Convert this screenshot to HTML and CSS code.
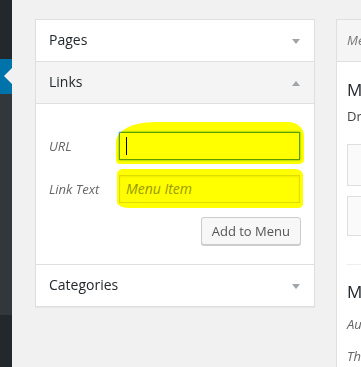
FILE: index.html
```html
<!DOCTYPE html>
<html lang="en">

<head>
    <meta charset="UTF-8">
    <meta name="viewport" content="width=device-width, initial-scale=1.0">
    <title>Menus</title>
    <link rel="stylesheet" href="styles.css">
</head>

<body>
    <div id="adminmenu">
        <div class="menu-top"></div>
        <div class="menu-current"><span class="notch"></span></div>
        <div class="menu-rest"></div>
        <div class="menu-bottom"></div>
    </div>

    <div id="content">
        <div class="accordion">
            <div class="section">
                <h3 class="section-title">Pages <span class="arrow down"></span></h3>
            </div>
            <div class="section open">
                <h3 class="section-title">Links <span class="arrow up"></span></h3>
                <div class="section-body">
                    <div class="field-row">
                        <label>URL</label>
                        <div class="input-wrap">
                            <div class="text-input focused"><span class="caret"></span></div>
                            <span class="highlight hl-one"></span>
                        </div>
                    </div>
                    <div class="field-row">
                        <label>Link Text</label>
                        <div class="input-wrap">
                            <div class="text-input"><span class="placeholder">Menu Item</span></div>
                            <span class="highlight hl-two"></span>
                        </div>
                    </div>
                    <div class="button-row">
                        <button class="button">Add to Menu</button>
                    </div>
                </div>
            </div>
            <div class="section">
                <h3 class="section-title">Categories <span class="arrow down"></span></h3>
            </div>
        </div>

        <div class="menu-edit">
            <div class="menu-header">Menu Name</div>
            <div class="menu-body">
                <h3>Menu Structure</h3>
                <p class="drag-note">Drag each item into the order you prefer.</p>
                <div class="menu-item"></div>
                <div class="menu-item short"></div>
                <hr>
                <h3>Menu Settings</h3>
                <p class="setting">Auto add pages</p>
                <p class="setting">Theme locations</p>
            </div>
        </div>
    </div>
</body>

</html>
```

FILE: styles.css
```css
body {
    margin: 0;
    height: 367px;
    overflow: hidden;
    display: flex;
    background-color: #f1f1f1;
    font-family: "Open Sans", "DejaVu Sans", sans-serif;
    color: #23282d;
}

#adminmenu {
    width: 12px;
    flex: none;
    display: flex;
    flex-direction: column;
}

.menu-top {
    height: 59px;
    background-color: #23282d;
}

.menu-current {
    position: relative;
    height: 35px;
    background-color: #0073aa;
}

.notch {
    position: absolute;
    right: 0;
    top: 9px;
    width: 0;
    height: 0;
    border-top: 8px solid transparent;
    border-bottom: 8px solid transparent;
    border-right: 8px solid #f1f1f1;
}

.menu-rest {
    height: 221px;
    background-color: #32373c;
}

.menu-bottom {
    flex: 1;
    background-color: #23282d;
}

#content {
    display: flex;
    align-items: flex-start;
    gap: 21px;
    padding: 19px 0 0 23px;
}

.accordion {
    width: 278px;
    flex: none;
    background-color: #fff;
    border: 1px solid #dfdfdf;
    box-shadow: 0 1px 1px rgba(0, 0, 0, 0.04);
}

.section {
    border-bottom: 1px solid #dfdfdf;
}

.section:last-child {
    border-bottom: none;
}

.section-title {
    position: relative;
    margin: 0;
    padding: 9px 13px 11px;
    height: 21px;
    line-height: 21px;
    font-size: 14px;
    font-weight: normal;
}

.open .section-title {
    background-color: #f4f4f4;
    border-bottom: 1px solid #dfdfdf;
}

.arrow {
    position: absolute;
    right: 14px;
    top: 19px;
    width: 0;
    height: 0;
    border-left: 4px solid transparent;
    border-right: 4px solid transparent;
}

.arrow.down {
    border-top: 5px solid #a0a5aa;
}

.arrow.up {
    border-bottom: 5px solid #a0a5aa;
}

.section-body {
    padding: 28px 13px 19px 13px;
}

.field-row {
    display: flex;
    align-items: center;
    margin-bottom: 15px;
}

.field-row label {
    width: 70px;
    flex: none;
    font-size: 13px;
    font-style: italic;
    color: #666;
}

.input-wrap {
    position: relative;
    flex: 1;
    margin-right: 1px;
}

.text-input {
    position: relative;
    height: 26px;
    border: 1px solid #ddd;
    background-color: #fff;
    box-shadow: inset 0 1px 2px rgba(0, 0, 0, 0.07);
    font-size: 14px;
    line-height: 26px;
    padding: 0 6px;
}

.text-input.focused {
    border-color: #5b9dd9;
    box-shadow: 0 0 2px rgba(30, 140, 190, 0.8);
}

.caret {
    position: absolute;
    left: 6px;
    top: 4px;
    height: 18px;
    border-left: 1px solid #000;
}

.placeholder {
    font-style: italic;
    color: #999;
}

.highlight {
    position: absolute;
    background-color: #ffff00;
    mix-blend-mode: multiply;
    pointer-events: none;
}

.hl-one {
    left: -3px;
    right: -4px;
    top: -10px;
    bottom: -4px;
    border-radius: 38px 16px 5px 4px / 20px 14px 4px 4px;
}

.hl-two {
    left: -2px;
    right: -3px;
    top: -6px;
    bottom: -5px;
    border-radius: 6px 8px 5px 12px / 5px 6px 4px 6px;
}

.button-row {
    display: flex;
    justify-content: flex-end;
    margin-top: -1px;
}

.button {
    height: 28px;
    padding: 0 10px;
    border: 1px solid #ccc;
    border-radius: 3px;
    background-color: #f7f7f7;
    box-shadow: 0 1px 0 #ccc;
    font-family: "Open Sans", "DejaVu Sans", sans-serif;
    font-size: 13px;
    color: #555;
}

.menu-edit {
    width: 400px;
    flex: none;
    height: 360px;
    background-color: #fff;
    border-left: 1px solid #dfdfdf;
    border-top: 1px solid #dfdfdf;
}

.menu-header {
    height: 41px;
    line-height: 41px;
    padding: 0 10px;
    background-color: #f5f5f5;
    border-bottom: 1px solid #dfdfdf;
    font-size: 13px;
    font-style: italic;
    color: #777;
}

.menu-body {
    padding: 0 10px;
}

.menu-body h3 {
    margin: 0;
    font-size: 17px;
    font-weight: normal;
    line-height: 24px;
}

.menu-body h3:first-child {
    padding-top: 16px;
}

.drag-note {
    margin: 4px 0 0;
    font-size: 13px;
    line-height: 20px;
    color: #444;
}

.menu-item {
    height: 40px;
    margin-top: 18px;
    background-color: #fafafa;
    border: 1px solid #dfdfdf;
}

.menu-item.short {
    height: 38px;
    margin-top: 10px;
}

.menu-body hr {
    margin: 28px 0 0;
    border: none;
    border-top: 1px solid #eee;
}

.menu-body hr + h3 {
    padding-top: 15px;
}

.setting {
    margin: 8px 0 0;
    font-size: 13px;
    line-height: 24px;
    font-style: italic;
    color: #666;
}

.setting + .setting {
    margin-top: 8px;
}
```
